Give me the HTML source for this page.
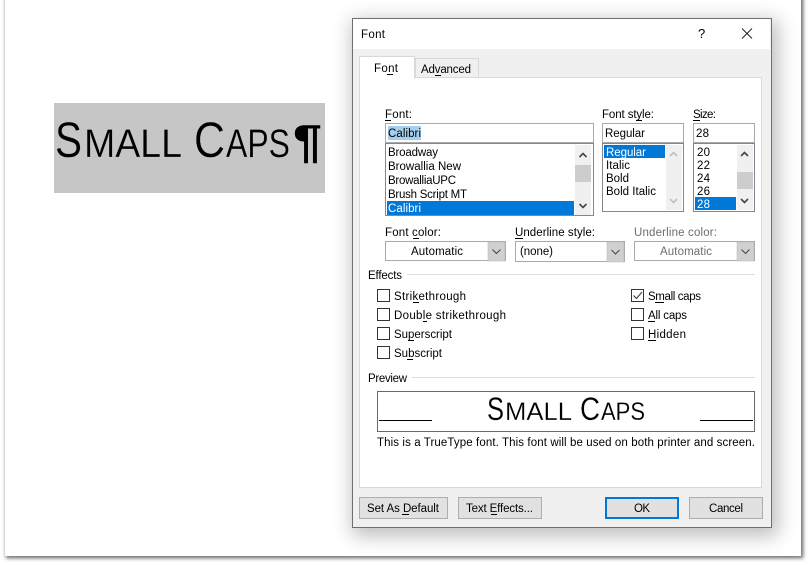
<!DOCTYPE html>
<html><head><meta charset="utf-8"><style>
html,body{margin:0;padding:0;width:810px;height:565px;overflow:hidden;background:#fff}
#page{position:absolute;left:5px;top:-10px;width:796px;height:566px;background:#fff;box-shadow:1px 1px 4px 0 rgba(0,0,0,.5),2px 2px 3px 1px rgba(0,0,0,.25)}
#dlg{position:absolute;left:352px;top:18px;width:418px;height:508px;background:#f0f0f0;border:1px solid #6f6f6f;box-shadow:3px 5px 18px 3px rgba(0,0,0,.26)}
svg{position:absolute;left:0;top:0}
text{font-family:"Liberation Sans",sans-serif;font-size:11.5px;fill:#000}
.g{fill:#6d6d6d}.w{fill:#fff}
.ch{fill:none;stroke:#444;stroke-width:1.6}
.cd{fill:none;stroke:#c0c0c0;stroke-width:1.6}
.cc{fill:none;stroke:#444;stroke-width:1}
.b{fill:#fff;stroke:#828790}
.i{fill:#fff;stroke:#a9a9a9}
.cb{fill:#fff;stroke:#333}
.btn{fill:#e1e1e1;stroke:#adadad}
</style></head><body>
<div id="page"></div>
<div id="dlg"></div>
<svg width="810" height="565" viewBox="0 0 810 565">
<!-- doc text -->
<rect x="54" y="103" width="271" height="90" fill="#c6c6c6"/>
<g stroke="#c6c6c6" stroke-width=".25">
<text x="55" y="157" textLength="27" lengthAdjust="spacingAndGlyphs" style="font-size:50px">S</text>
<text x="84" y="157" textLength="98" lengthAdjust="spacingAndGlyphs" style="font-size:40px">MALL</text>
<text x="194" y="157" textLength="31" lengthAdjust="spacingAndGlyphs" style="font-size:50px">C</text>
<text x="226" y="157" textLength="64" lengthAdjust="spacingAndGlyphs" style="font-size:40px">APS</text>
</g>
<text x="293" y="157" textLength="29" lengthAdjust="spacingAndGlyphs" style="font-size:46px;font-weight:bold">¶</text>

<!-- title bar -->
<rect x="353" y="19" width="417" height="30" fill="#fff"/>
<text x="361" y="38" textLength="24">Font</text>
<text x="698" y="38" textLength="7" style="font-size:13px">?</text>
<path d="M742 28.500L752 38.500M752 28.500L742 38.500" stroke="#222" stroke-width="1" fill="none"/>

<!-- tabs -->
<rect x="359.500" y="77.500" width="402" height="410" fill="#fff" stroke="#d9d9d9"/>
<rect x="415.500" y="58.500" width="63" height="19" fill="#f0f0f0" stroke="#d9d9d9"/>
<rect x="359.500" y="56.500" width="55" height="22" fill="#fff" stroke="#d9d9d9"/>
<rect x="360" y="76" width="54" height="3" fill="#fff"/>
<text x="374" y="72" textLength="24">Font</text><rect x="387" y="74" width="6" height="1"/>
<text x="421" y="73" textLength="50">Advanced</text><rect x="435" y="75" width="6" height="1"/>

<!-- labels -->
<text x="385" y="118" textLength="27">Font:</text><rect x="385" y="120" width="6" height="1"/>
<text x="602" y="118" textLength="52">Font style:</text><rect x="636" y="120" width="6" height="1"/>
<text x="693" y="118" textLength="23">Size:</text><rect x="693" y="120" width="7" height="1"/>

<!-- inputs -->
<rect x="385.500" y="123.500" width="208" height="19" class="i"/>
<rect x="388" y="126" width="33" height="14" fill="#a6cfee"/>
<text x="388" y="137" textLength="33">Calibri</text>
<rect x="602.500" y="123.500" width="81" height="19" class="i"/>
<text x="605" y="137" textLength="40">Regular</text>
<rect x="693.500" y="123.500" width="61" height="19" class="i"/>
<text x="696" y="137" textLength="13">28</text>

<!-- font list -->
<rect x="385.500" y="143.500" width="208" height="72" class="b"/>
<rect x="387" y="201" width="187" height="14" fill="#0078d7"/>
<text x="388" y="156" textLength="50">Broadway</text>
<text x="388" y="170" textLength="73">Browallia New</text>
<text x="388" y="184" textLength="68">BrowalliaUPC</text>
<text x="388" y="198" textLength="79">Brush Script MT</text>
<text x="388" y="212" textLength="33" class="w">Calibri</text>
<rect x="575" y="145" width="16" height="70" fill="#f0f0f0"/>
<rect x="575" y="165" width="16" height="17" fill="#cdcdcd"/>
<path d="M579.500 157L583 153.500L586.500 157M579.500 204L583 207.500L586.500 204" class="ch"/>

<!-- style list -->
<rect x="602.500" y="143.500" width="81" height="68" class="b"/>
<rect x="604" y="145" width="61" height="13" fill="#0078d7"/>
<text x="606" y="156" textLength="40" class="w">Regular</text>
<text x="606" y="169" textLength="24">Italic</text>
<text x="606" y="182" textLength="23">Bold</text>
<text x="606" y="195" textLength="50">Bold Italic</text>
<rect x="666" y="145" width="16" height="65" fill="#f0f0f0"/>
<path d="M670 156L673.500 152.500L677 156M670 199L673.500 202.500L677 199" class="cd"/>

<!-- size list -->
<rect x="693.500" y="143.500" width="61" height="68" class="b"/>
<rect x="695" y="197" width="41" height="13" fill="#0078d7"/>
<text x="697" y="156" textLength="13">20</text>
<text x="697" y="169" textLength="13">22</text>
<text x="697" y="182" textLength="13">24</text>
<text x="697" y="195" textLength="13">26</text>
<text x="697" y="208" textLength="13" class="w">28</text>
<rect x="737" y="145" width="16" height="65" fill="#f0f0f0"/>
<rect x="737" y="172" width="16" height="17" fill="#cdcdcd"/>
<path d="M741 156L744.500 152.500L748 156M741 199L744.500 202.500L748 199" class="ch"/>

<!-- combos -->
<text x="385" y="236" textLength="56">Font color:</text><rect x="413" y="238" width="6" height="1"/>
<text x="515" y="236" textLength="80">Underline style:</text><rect x="515" y="238" width="8" height="1"/>
<text x="634" y="236" textLength="83" class="g">Underline color:</text>

<rect x="385.500" y="241.500" width="120" height="19" class="i"/>
<rect x="488" y="242" width="17" height="19" fill="#d0d0d0" stroke="#b5b5b5" stroke-width=".5"/>
<path d="M492.500 249.500L496.500 253.500L500.500 249.500" class="cc"/>
<text x="411" y="255" textLength="52">Automatic</text>

<rect x="515.500" y="241.500" width="109" height="20" class="i"/>
<rect x="607" y="242" width="17" height="20" fill="#d0d0d0" stroke="#b5b5b5" stroke-width=".5"/>
<path d="M611.500 250L615.500 254L619.500 250" class="cc"/>
<text x="520" y="255" textLength="33">(none)</text>

<rect x="634.500" y="241.500" width="120" height="19" class="i"/>
<rect x="737" y="242" width="17" height="19" fill="#d0d0d0" stroke="#b5b5b5" stroke-width=".5"/>
<path d="M741.500 249.500L745.500 253.500L749.500 249.500" class="cc"/>
<text x="660" y="255" textLength="52" class="g">Automatic</text>

<!-- effects -->
<text x="368" y="279" textLength="34">Effects</text>
<rect x="407" y="274" width="348" height="1" fill="#dcdcdc"/>
<rect x="377.500" y="289.500" width="12" height="12" class="cb"/>
<rect x="377.500" y="308.500" width="12" height="12" class="cb"/>
<rect x="377.500" y="327.500" width="12" height="12" class="cb"/>
<rect x="377.500" y="346.500" width="12" height="12" class="cb"/>
<text x="394" y="300" textLength="72">Strikethrough</text><rect x="413" y="302" width="6" height="1"/>
<text x="394" y="319" textLength="112">Double strikethrough</text><rect x="423" y="321" width="4" height="1"/>
<text x="394" y="338" textLength="58">Superscript</text><rect x="408" y="340" width="6" height="1"/>
<text x="394" y="357" textLength="48">Subscript</text><rect x="407" y="359" width="6" height="1"/>

<rect x="631.500" y="289.500" width="12" height="12" class="cb"/>
<path d="M633.500 295.500L636.500 298.500L642 292" fill="none" stroke="#333" stroke-width="1"/>
<rect x="631.500" y="308.500" width="12" height="12" class="cb"/>
<rect x="631.500" y="327.500" width="12" height="12" class="cb"/>
<text x="648" y="300" textLength="53">Small caps</text><rect x="655" y="302" width="9" height="1"/>
<text x="648" y="319" textLength="39">All caps</text><rect x="648" y="321" width="7" height="1"/>
<text x="648" y="338" textLength="38">Hidden</text><rect x="648" y="340" width="8" height="1"/>

<!-- preview -->
<text x="368" y="382" textLength="39">Preview</text>
<rect x="412" y="377" width="343" height="1" fill="#dcdcdc"/>
<rect x="377.500" y="391.500" width="377" height="40" fill="#fff" stroke="#696969"/>
<rect x="379" y="420" width="53" height="1" fill="#000"/>
<rect x="700" y="420" width="53" height="1" fill="#000"/>
<g stroke="#fff" stroke-width=".15">
<text x="487" y="420" textLength="17" lengthAdjust="spacingAndGlyphs" style="font-size:32px">S</text>
<text x="505" y="420" textLength="67" lengthAdjust="spacingAndGlyphs" style="font-size:25px">MALL</text>
<text x="580" y="420" textLength="20" lengthAdjust="spacingAndGlyphs" style="font-size:32px">C</text>
<text x="601" y="420" textLength="44" lengthAdjust="spacingAndGlyphs" style="font-size:25px">APS</text>
</g>
<text x="377" y="446" textLength="378">This is a TrueType font. This font will be used on both printer and screen.</text>

<!-- buttons -->
<rect x="359.500" y="497.500" width="88" height="21" class="btn"/>
<text x="367" y="512" textLength="72">Set As Default</text><rect x="402" y="514" width="7" height="1"/>
<rect x="458.500" y="497.500" width="83" height="21" class="btn"/>
<text x="466" y="512" textLength="67">Text Effects...</text><rect x="491" y="514" width="6" height="1"/>
<rect x="606" y="498" width="72" height="20" fill="#e1e1e1" stroke="#0078d7" stroke-width="2"/>
<text x="634" y="512" textLength="16">OK</text>
<rect x="689.500" y="497.500" width="73" height="21" class="btn"/>
<text x="709" y="512" textLength="34">Cancel</text>
</svg>
</body></html>
